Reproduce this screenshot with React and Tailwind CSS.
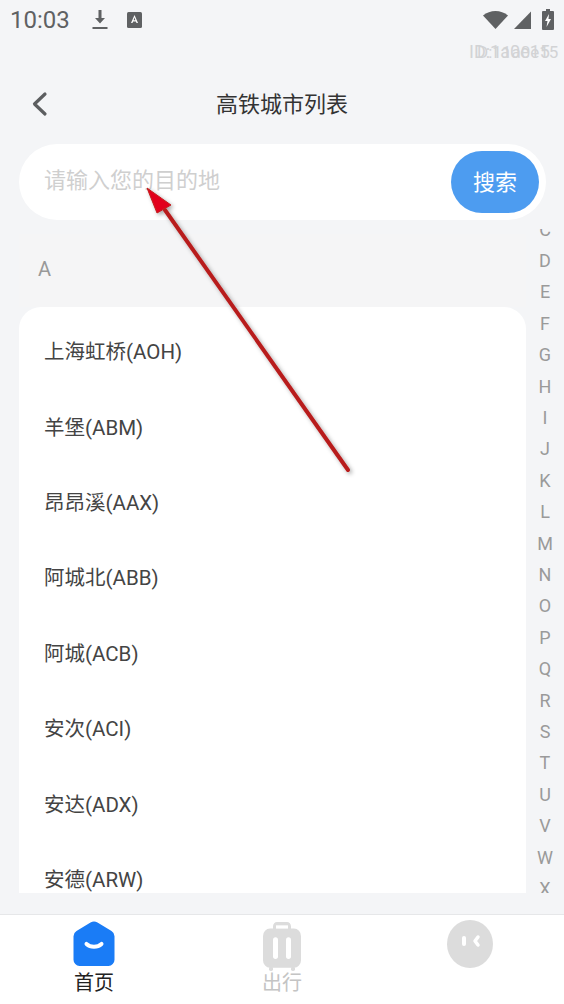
const cities = [
  "上海虹桥(AOH)",
  "羊堡(ABM)",
  "昂昂溪(AAX)",
  "阿城北(ABB)",
  "阿城(ACB)",
  "安次(ACI)",
  "安达(ADX)",
  "安德(ARW)",
]

const letters = ["C", "D", "E", "F", "G", "H", "I", "J", "K", "L", "M", "N", "O", "P", "Q", "R", "S", "T", "U", "V", "W", "X"]

function StatusBar() {
  return (
    <div className="h-[40px] flex items-center justify-between pl-[10px] pr-[10px] text-[#5f6163]">
      <div className="flex items-center">
        <span className="text-[24px] leading-none">10:03</span>
        <svg className="ml-[21px]" width="18" height="22" viewBox="0 0 18 22" fill="#5f6163">
          <path d="M7.5 1h3v8h3.5L9 14.5 4 9h3.5z" />
          <rect x="1.5" y="18" width="15" height="2" />
        </svg>
        <svg className="ml-[18px]" width="16" height="16" viewBox="0 0 16 16">
          <rect width="15" height="16" rx="1.5" fill="#5f6163" />
          <path d="M7.5 3 11 11H9.5l-.6-1.6H6.1L5.5 11H4zM6.6 8.2h1.8L7.5 5.6z" fill="#fff" />
        </svg>
      </div>
      <div className="flex items-center">
        <svg width="26" height="20" viewBox="0 0 26 20" fill="#5f6163">
          <path d="M0 5.5C3.5 2.5 8 1 12.5 1S21.500 2.500 25 5.500L12.500 19z" />
        </svg>
        <svg className="ml-[4px]" width="18" height="20" viewBox="0 0 18 20" fill="#5f6163">
          <path d="M18 1.500V19H1z" />
        </svg>
        <svg className="ml-[11px]" width="12" height="22" viewBox="0 0 12 22" fill="#5f6163">
          <path d="M4 0h4v2h3a1 1 0 0 1 1 1v17a1 1 0 0 1-1 1H1a1 1 0 0 1-1-1V3a1 1 0 0 1 1-1h3z" />
          <path d="M7 5 3 12h2.500L4.500 18 9 10H6.500z" fill="#fff" />
        </svg>
      </div>
    </div>
  )
}

function TabBar() {
  return (
    <div className="h-[90px] shrink-0 bg-white border-t border-[#e6e7e9] grid grid-cols-3">
      <div className="flex flex-col items-center pt-[6px]">
        <svg width="42" height="46" viewBox="0 0 42 44" preserveAspectRatio="none">
          <path d="M17.500 1.500a7 7 0 0 1 7 0L38.500 9.500a6 6 0 0 1 3 5V37a6 6 0 0 1-6 6H6.500a6 6 0 0 1-6-6V14.500a6 6 0 0 1 3-5z" fill="#1a7cf6" />
          <path d="M13.500 22c4 3.500 11 3.500 15 0" fill="none" stroke="#fff" strokeWidth="4" strokeLinecap="round" />
        </svg>
        <span className="text-[20px] leading-[26px] mt-[3px] text-[#222]">首页</span>
      </div>
      <div className="flex flex-col items-center pt-[6px]">
        <svg width="38" height="50" viewBox="0 0 38 46" preserveAspectRatio="none">
          <path d="M10 7V5a4 4 0 0 1 4-4h10a4 4 0 0 1 4 4v2h3a7 7 0 0 1 7 7v22a7 7 0 0 1-7 7H7a7 7 0 0 1-7-7V14a7 7 0 0 1 7-7z" fill="#dcdcdc" />
          <rect x="13" y="4" width="12" height="3" fill="#fff" />
          <rect x="10" y="15" width="5" height="20" rx="2.500" fill="#fff" />
          <rect x="23" y="15" width="5" height="20" rx="2.500" fill="#fff" />
          <rect x="6" y="42" width="4" height="4" rx="1.500" fill="#dcdcdc" />
          <rect x="28" y="42" width="4" height="4" rx="1.500" fill="#dcdcdc" />
        </svg>
        <span className="text-[20px] leading-[26px] mt-[-1px] text-[#c4c4c4]">出行</span>
      </div>
      <div className="flex flex-col items-center pt-[5px]">
        <svg width="46" height="48" viewBox="0 0 46 48">
          <ellipse cx="23" cy="24" rx="23" ry="24" fill="#dcdcdc" />
          <rect x="15" y="16" width="4" height="10" rx="2" fill="#fff" />
          <path d="M31 17 28 21 31 25" fill="none" stroke="#fff" strokeWidth="3.500" strokeLinecap="round" strokeLinejoin="round" />
        </svg>
      </div>
    </div>
  )
}

export default function App() {
  return (
    <div
      className="relative w-[564px] h-[1004px] overflow-hidden flex flex-col bg-[#f4f5f7]"
      style={{ fontFamily: 'Roboto, "Noto Sans CJK SC", sans-serif' }}
    >
      <StatusBar />

      {/* watermark, two copies drawn on top of each other */}
      <span className="absolute left-[469px] top-[43px] text-[18px] leading-[18px] text-[#d2d3d5]">ID:1a0e15</span>
      <span className="absolute left-[477px] top-[43px] text-[17px] leading-[18px] text-[#d2d3d5]">D:11a0e15</span>

      <div className="h-[84px] mt-[1px] pt-[44px] shrink-0 flex items-start">
        <div className="relative flex-1 flex justify-center items-center h-[40px]">
          <svg className="absolute left-[29px] top-[6px]" width="20" height="26" viewBox="0 0 20 26" fill="none">
            <path d="M16 3 5.500 13 16 23" stroke="#5c5e60" strokeWidth="3.200" strokeLinecap="round" strokeLinejoin="round" />
          </svg>
          <span className="text-[22px] leading-[30px] text-[#333]">高铁城市列表</span>
        </div>
      </div>

      <div className="mt-[19px] mx-[19px] mr-[18px] h-[76px] shrink-0 rounded-[38px] bg-white flex items-center justify-between pl-[25px] pr-[7px]">
        <span className="text-[22px] leading-[30px] -mt-[2px] text-[#cfcfcf]">请输入您的目的地</span>
        <div className="w-[88px] h-[62px] rounded-[31px] bg-[#4d9cf0] flex items-center justify-center text-white text-[22px]">搜索</div>
      </div>

      <div className="mt-[14px] flex-1 min-h-0 flex">
        <div className="ml-[19px] w-[507px] flex flex-col overflow-hidden">
          <div className="h-[73px] shrink-0 bg-[#f5f5f6] pl-[19px] pb-[4px] flex items-center text-[20px] text-[#999]">A</div>
          <div className="bg-white rounded-t-[22px] flex flex-col h-[586px] overflow-hidden pl-[25px] pt-[8px]">
            {cities.map((name) => (
              <div key={name} className="h-[75.400px] shrink-0 flex items-center text-[20.500px] text-[#444]">
                {name}
              </div>
            ))}
          </div>
        </div>
        <div className="flex-1 -mt-[5px] h-[664px] overflow-hidden flex flex-col items-center">
          <div className="-mt-[15.500px] flex flex-col items-center">
            {letters.map((l) => (
              <div key={l} className="h-[31.400px] shrink-0 flex items-center text-[18px] text-[#9a9a9a]">
                {l}
              </div>
            ))}
          </div>
        </div>
      </div>

      <div className="h-[21px] shrink-0" />
      <TabBar />

      {/* annotation arrow over the screenshot */}
      <svg className="absolute left-0 top-0 pointer-events-none" width="564" height="1004" viewBox="0 0 564 1004">
        <defs>
          <filter id="arrowShadow" x="-20%" y="-20%" width="140%" height="140%">
            <feDropShadow dx="2" dy="2" stdDeviation="2" floodColor="#000" floodOpacity="0.35" />
          </filter>
        </defs>
        <g filter="url(#arrowShadow)">
          <path d="M348 470 165 210" stroke="#b81e1e" strokeWidth="4" strokeLinecap="round" />
          <path d="M147 188 171 205 157 213z" fill="#e2051a" stroke="#c0201f" strokeWidth="1" strokeLinejoin="round" />
        </g>
      </svg>
    </div>
  )
}
